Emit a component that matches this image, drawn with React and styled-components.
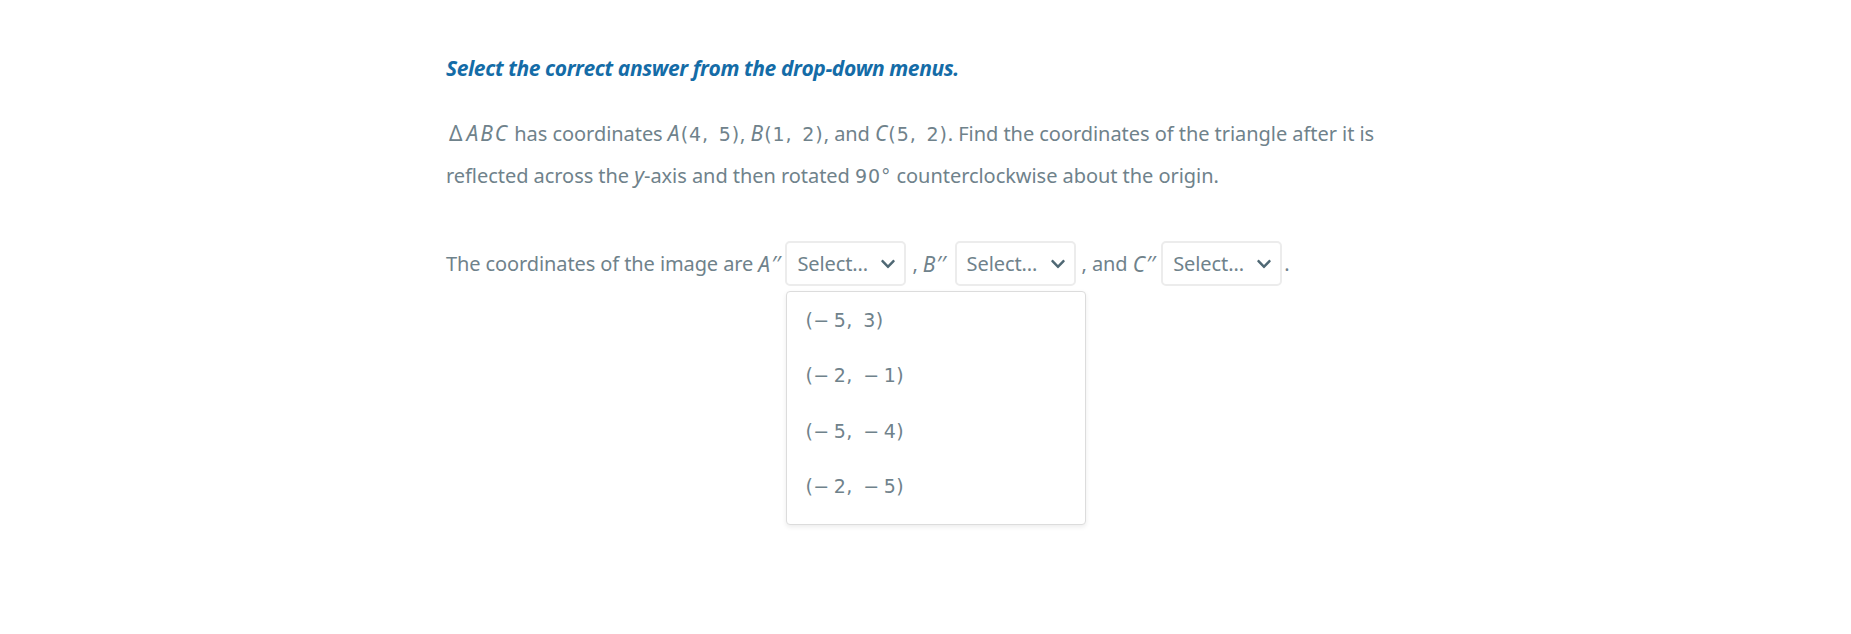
import React from "react";
import styled, { createGlobalStyle } from "styled-components";
import { FaChevronDown } from "react-icons/fa";

const Global = createGlobalStyle`
  html, body { margin: 0; padding: 0; background: #ffffff; }
  body { font-family: "Noto Sans", "Open Sans", sans-serif; }
`;

const Page = styled.div`
  width: 1851px;
  height: 634px;
  box-sizing: border-box;
  padding: 52px 0 0 446px;
`;

const Content = styled.div`
  width: 1100px;
`;

const Heading = styled.h2`
  margin: 0;
  font-family: "Open Sans", sans-serif;
  font-size: 21px;
  font-weight: 700;
  font-style: italic;
  letter-spacing: -0.4px;
  color: #146ca7;
  line-height: 32px;
`;

const Para = styled.p`
  margin: 29px 0 0;
  font-size: 20px;
  font-weight: 400;
  line-height: 41px;
  color: #6f828b;
  letter-spacing: -0.05px;
`;

const Var = styled.span`
  font-style: italic;
  font-size: 21px;
  letter-spacing: ${(p) => p.$ls ?? 1}px;
`;

const Delta = styled.span`
  font-size: 21px;
  margin: 0 4px 0 3px;
`;

const Prime = styled.span`
  font-style: italic;
  font-size: 21px;
  letter-spacing: 0;
`;

const MathNum = styled.span`
  font-family: "DejaVu Sans", sans-serif;
  font-size: 19px;
  font-weight: 400;
  letter-spacing: 0.9px;
  word-spacing: 3px;
`;

const Row = styled.div`
  margin-top: 44px;
  display: flex;
  align-items: center;
  font-size: 20px;
  font-weight: 400;
  color: #6f828b;
  letter-spacing: -0.1px;
  white-space: pre;
`;

const SelectWrap = styled.div`
  position: relative;
  margin: 0 ${(p) => p.$mr ?? 6}px 0 ${(p) => p.$ml ?? 7}px;
`;

const SelectBox = styled.div`
  box-sizing: border-box;
  width: 121px;
  height: 45px;
  border: 2px solid #ececec;
  border-radius: 5px;
  display: flex;
  align-items: center;
  justify-content: space-between;
  padding: 0 8px 0 10px;
  color: #6f828b;
  font-size: 20px;
  font-weight: 400;
`;

const Chevron = styled(FaChevronDown)`
  color: #4f6874;
  width: 16px;
  height: 16px;
  flex: none;
`;

const Menu = styled.ul`
  position: absolute;
  top: 50px;
  left: 1px;
  width: 300px;
  height: 234px;
  box-sizing: border-box;
  margin: 0;
  padding: 0;
  list-style: none;
  background: #fff;
  border: 1px solid #dcdcdc;
  border-radius: 4px;
  box-shadow: 0 2px 5px rgba(0, 0, 0, 0.08);
  z-index: 5;
`;

const Option = styled.li`
  height: 55.5px;
  display: flex;
  align-items: center;
  padding-left: 18px;
  font-family: "DejaVu Sans", sans-serif;
  font-size: 19px;
  font-weight: 400;
  color: #6f828b;
  white-space: pre;
  letter-spacing: 0.4px;
`;

function Select({ open, ml, mr, options }) {
  return (
    <SelectWrap $ml={ml} $mr={mr}>
      <SelectBox>
        <span>Select...</span>
        <Chevron />
      </SelectBox>
      {open && (
        <Menu>
          {options.map((o) => (
            <Option key={o}>{o}</Option>
          ))}
        </Menu>
      )}
    </SelectWrap>
  );
}

function Pt({ v }) {
  return (
    <>
      <Var>{v}</Var>
      <Prime>′′</Prime>
    </>
  );
}

const options = [
  "(\u2212\u20095, \u20093)",
  "(\u2212\u20092, \u2009\u2212\u20091)",
  "(\u2212\u20095, \u2009\u2212\u20094)",
  "(\u2212\u20092, \u2009\u2212\u20095)",
];

export default function App() {
  return (
    <>
      <Global />
      <Page>
        <Content>
          <Heading>Select the correct answer from the drop-down menus.</Heading>
          <Para>
            <Delta>Δ</Delta>
            <Var $ls={2}>ABC</Var> has coordinates <Var>A</Var>
            <MathNum>(4, 5)</MathNum>, <Var>B</Var>
            <MathNum>(1, 2)</MathNum>, and <Var>C</Var>
            <MathNum>(5, 2)</MathNum>. Find the coordinates of the triangle after it is
            <br />
            reflected across the <Var $ls={0}>y</Var>-axis and then rotated{" "}
            <MathNum>90°</MathNum> counterclockwise about the origin.
          </Para>
          <Row>
            <span>The coordinates of the image are </span>
            <Pt v="A" />
            <Select open options={options} ml={5} />
            <span>, </span>
            <Pt v="B" />
            <Select ml={9} />
            <span>, and </span>
            <Pt v="C" />
            <Select ml={6} mr={2} />
            <span>.</span>
          </Row>
        </Content>
      </Page>
    </>
  );
}
